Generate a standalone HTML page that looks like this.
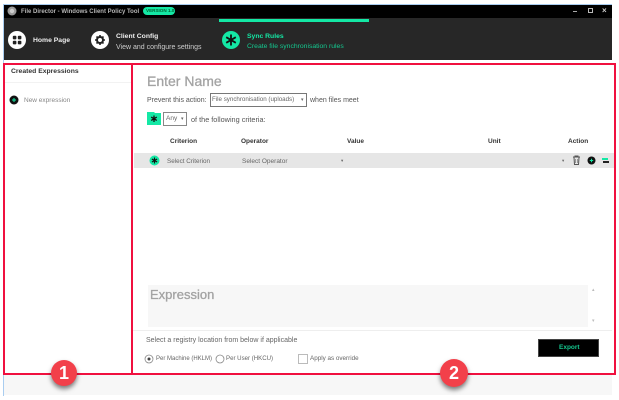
<!DOCTYPE html>
<html><head><meta charset="utf-8"><style>
html,body{margin:0;padding:0;background:#fff}
#p{position:relative;width:619px;height:400px;overflow:hidden;background:#fff;font-family:"Liberation Sans",sans-serif;filter:blur(.3px)}
#p div,#p span.t,#p svg{position:absolute}
.t{position:absolute;white-space:nowrap;line-height:1}
.g{color:#666;font-size:6.5px}
.h{color:#333;font-size:6.5px;font-weight:bold}
</style></head><body><div id="p">
<div style="left:3px;top:4px;width:1px;height:392px;background:#a9cdf0"></div>
<div style="left:3px;top:4px;width:609px;height:1px;background:#a9cdf0"></div>
<div style="left:4px;top:5px;width:608px;height:13px;background:#000"></div>
<div style="left:4px;top:18px;width:608px;height:42px;background:#272727"></div>
<div style="left:4px;top:375px;width:608px;height:20px;background:#f7f7f7"></div>

<svg style="left:7px;top:6px" width="11" height="11"><circle cx="5" cy="5" r="4.500" fill="#9a9a9a"/><circle cx="5" cy="5" r="2.200" fill="#ccc"/></svg>
<span class="t" style="left:21px;top:9px;font-size:6px;font-weight:bold;color:#b5b5b5">File Director - Windows Client Policy Tool</span>
<div style="left:143px;top:7px;width:32px;height:8px;border-radius:4px;background:#14e8a5"></div>
<span class="t" style="left:146px;top:9px;font-size:4.600px;font-weight:bold;color:#063">VERSION 1.0</span>
<div style="left:573px;top:11px;width:4px;height:1px;background:#aaa"></div>
<div style="left:588px;top:8px;width:5px;height:5px;border:1px solid #bbb;box-sizing:border-box"></div>
<span class="t" style="left:602px;top:7px;font-size:8px;font-weight:bold;color:#ccc">×</span>
<div style="left:219px;top:19px;width:150px;height:3px;background:#14e8a5"></div>

<svg style="left:8px;top:31px" width="18" height="18"><circle cx="9" cy="9" r="9" fill="#fff"/><rect x="4.800" y="4.800" width="3.600" height="3.600" rx="1" fill="#222"/><rect x="9.800" y="4.800" width="3.600" height="3.600" rx="1" fill="#222"/><rect x="4.800" y="9.800" width="3.600" height="3.600" rx="1" fill="#222"/><rect x="9.800" y="9.800" width="3.600" height="3.600" rx="1" fill="#222"/></svg>
<span class="t" style="left:33px;top:38px;font-size:6.800px;font-weight:bold;color:#eee">Home Page</span>
<svg style="left:91px;top:31px" width="18" height="18"><circle cx="9" cy="9" r="9" fill="#fff"/><circle cx="9" cy="9" r="3" fill="none" stroke="#222" stroke-width="2"/><path d="M9 4v2M9 12v2M4 9h2M12 9h2M5.500 5.500l1.400 1.400M11.100 11.100l1.400 1.400M5.500 12.500l1.400-1.400M11.100 6.900l1.400-1.400" stroke="#222" stroke-width="1.600"/></svg>
<span class="t" style="left:116px;top:34px;font-size:6.800px;font-weight:bold;color:#eee">Client Config</span>
<span class="t" style="left:116px;top:44px;font-size:7px;color:#ccc">View and configure settings</span>
<svg style="left:222px;top:31px" width="18" height="18"><circle cx="9" cy="9" r="9" fill="#14e8a5"/><path d="M9 3.500v11M4.200 6.200l9.600 5.600M4.200 11.800l9.600-5.600" stroke="#111" stroke-width="1.800"/></svg>
<span class="t" style="left:247px;top:34px;font-size:6.800px;font-weight:bold;color:#14e8a5">Sync Rules</span>
<span class="t" style="left:247px;top:44px;font-size:6.800px;color:#14c88f">Create file synchronisation rules</span>

<span class="t h" style="left:11px;top:69px;font-size:6.800px">Created Expressions</span>
<div style="left:5px;top:82px;width:126px;height:1px;background:#f2f2f2"></div>
<svg style="left:9px;top:95px" width="10" height="10"><circle cx="5" cy="5" r="4.500" fill="#111"/><path d="M5 3v4M3 5h4" stroke="#14e8a5" stroke-width="1"/></svg>
<span class="t g" style="left:24px;top:98px;color:#888">New expression</span>

<span class="t" style="left:147px;top:74px;font-size:14px;color:#a3a3a3;-webkit-text-stroke:.3px #a3a3a3">Enter Name</span>
<span class="t g" style="left:147px;top:97px;font-size:7px;color:#555">Prevent this action:</span>
<div style="left:210px;top:93px;width:97px;height:14px;border:1px solid #777;box-sizing:border-box;background:#fff"></div>
<span class="t g" style="left:212px;top:97px;font-size:6.200px">File synchronisation (uploads)</span>
<span class="t g" style="left:301px;top:98px;font-size:5px">▾</span>
<span class="t g" style="left:310px;top:97px;font-size:7px;color:#555">when files meet</span>

<svg style="left:147px;top:112px" width="14" height="13"><path d="M0 0h7l1 1h6v12H0z" fill="#14e8a5"/><path d="M7 3.500v6.500M4.200 5.100l5.600 3.300M4.200 8.400l5.600-3.300" stroke="#111" stroke-width="1.300"/></svg>
<div style="left:163px;top:112px;width:24px;height:14px;border:1px solid #888;box-sizing:border-box;background:#fff"></div>
<span class="t g" style="left:166px;top:116px">Any</span>
<span class="t g" style="left:181px;top:117px;font-size:5px">▾</span>
<span class="t g" style="left:191px;top:116px;font-size:7.300px;color:#555">of the following criteria:</span>

<span class="t h" style="left:170px;top:139px">Criterion</span>
<span class="t h" style="left:241px;top:139px">Operator</span>
<span class="t h" style="left:347px;top:139px">Value</span>
<span class="t h" style="left:488px;top:139px">Unit</span>
<span class="t h" style="left:568px;top:139px">Action</span>

<div style="left:134px;top:153px;width:480px;height:15px;background:#e6e6e6"></div>
<svg style="left:149px;top:155px" width="11" height="11"><circle cx="5.500" cy="5.500" r="5" fill="#14e8a5"/><path d="M5.500 2.500v6M2.900 4l5.200 3M2.900 7l5.200-3" stroke="#111" stroke-width="1.200"/></svg>
<span class="t g" style="left:167px;top:159px;font-size:6.300px">Select Criterion</span>
<span class="t g" style="left:242px;top:159px">Select Operator</span>
<span class="t g" style="left:341px;top:159px;font-size:4.500px">▾</span>
<span class="t g" style="left:562px;top:159px;font-size:4.500px">▾</span>
<svg style="left:572px;top:155px" width="9" height="10"><path d="M1 2h7M3 2V1h3v1M2 2.500l.5 7h4l.5-7" fill="none" stroke="#555" stroke-width="1"/><path d="M3.500 4v4M5.500 4v4" stroke="#777" stroke-width=".7"/></svg>
<svg style="left:587px;top:156px" width="9" height="9"><circle cx="4.500" cy="4.500" r="4" fill="#111"/><path d="M4.500 2.800v3.400M2.800 4.500h3.400" stroke="#14e8a5" stroke-width="1"/></svg>
<div style="left:602px;top:158px;width:6px;height:2px;background:#14e8a5"></div>
<div style="left:603px;top:161px;width:6px;height:2px;background:#222"></div>

<div style="left:148px;top:285px;width:440px;height:42px;background:#f7f7f7"></div>
<span class="t" style="left:150px;top:288px;font-size:13px;color:#a3a3a3;-webkit-text-stroke:.3px #a3a3a3">Expression</span>
<span class="t" style="left:592px;top:288px;font-size:5px;color:#bbb">▴</span>
<span class="t" style="left:592px;top:319px;font-size:5px;color:#bbb">▾</span>
<div style="left:133px;top:330px;width:479px;height:1px;background:#eee"></div>
<span class="t g" style="left:146px;top:337px;font-size:7px;color:#666">Select a registry location from below if applicable</span>
<svg style="left:144px;top:354px" width="10" height="10"><circle cx="5" cy="5" r="4" fill="#fff" stroke="#888" stroke-width=".8"/><circle cx="5" cy="5" r="1.500" fill="#444"/></svg>
<span class="t g" style="left:156px;top:356px;font-size:6px">Per Machine (HKLM)</span>
<svg style="left:215px;top:354px" width="10" height="10"><circle cx="5" cy="5" r="4" fill="#fff" stroke="#888" stroke-width=".8"/></svg>
<span class="t g" style="left:226px;top:356px;font-size:6.100px">Per User (HKCU)</span>
<div style="left:298px;top:354px;width:10px;height:10px;border:1px solid #bbb;box-sizing:border-box;background:#fff"></div>
<span class="t g" style="left:310px;top:356px;font-size:6.300px">Apply as override</span>
<div style="left:538px;top:339px;width:61px;height:18px;background:#000;border:1px solid #444;box-sizing:border-box"></div>
<span class="t" style="left:559px;top:345px;font-size:6.500px;font-weight:bold;color:#14c88f">Export</span>

<div style="left:3px;top:63px;width:130px;height:312px;border:2px solid #f0103f;box-sizing:border-box"></div>
<div style="left:131px;top:63px;width:485px;height:312px;border:2px solid #f0103f;box-sizing:border-box"></div>

<div style="left:51px;top:360px;width:26px;height:26px;border-radius:50%;background:#f2404a;box-shadow:0 3px 5px rgba(0,0,0,.5)"></div>
<span class="t" style="left:51px;top:364px;width:26px;text-align:center;font-size:18px;font-weight:bold;color:#fff">1</span>
<div style="left:440px;top:359px;width:28px;height:28px;border-radius:50%;background:#f2404a;box-shadow:0 3px 5px rgba(0,0,0,.5)"></div>
<span class="t" style="left:440px;top:364px;width:28px;text-align:center;font-size:18px;font-weight:bold;color:#fff">2</span>
</div></body></html>
